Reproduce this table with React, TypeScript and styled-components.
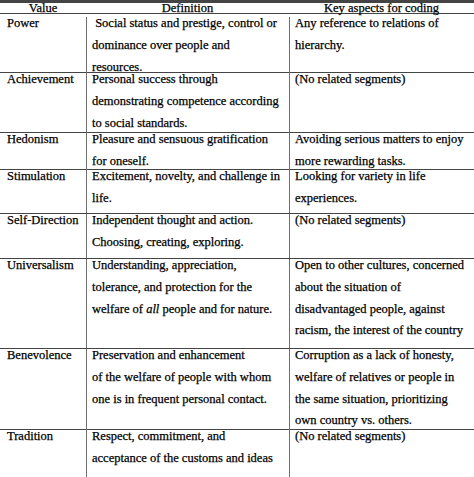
import { ReactElement, ReactNode } from 'react';
import styled, { createGlobalStyle } from 'styled-components';

const GlobalStyle = createGlobalStyle`
  html, body {
    margin: 0;
    padding: 0;
    background: #ffffff;
  }

  body {
    font-family: "Liberation Serif", "Times New Roman", serif;
    color: #000000;
  }
`;

const Table = styled.div`
  width: 474px;
  height: 477px;
  overflow: hidden;

  border-top: 3px solid #444444;
  font-size: 12.5px;
  -webkit-text-stroke: 0.25px #000000;
`;

const HeadRow = styled.div`
  display: grid;
  grid-template-columns: 86px 203px 1fr;

  height: 10px;
  line-height: 10px;
`;

const HeadCell = styled.div`
  text-align: center;
  white-space: nowrap;
  margin-top: 0;
`;

const Row = styled.div<{ $height: number; $lead?: number }>`
  display: grid;
  grid-template-columns: 86px 203px 1fr;

  box-sizing: border-box;
  height: ${(p) => p.$height}px;
  padding-top: ${(p) => p.$lead ?? 0}px;

  border-top: 1px solid #444444;
`;

const Cell = styled.div<{ $divider?: boolean }>`
  box-sizing: border-box;
  padding: 0 5px 0 ${(p) => (p.$divider ? '5px' : '7px')};
  border-left: ${(p) => (p.$divider ? '1px solid #6f6f6f' : 'none')};

  line-height: 21.8px;
  white-space: nowrap;
`;

const Lines = styled.div`
  margin-top: -4px;
`;

interface Entry {
  value: string;
  height: number;
  lead?: number;
  definition: ReactNode[];
  aspects: ReactNode[];
}

const entries: Entry[] = [
  {
    value: 'Power',
    height: 59,
    lead: 3,
    definition: ['\u00a0Social status and prestige, control or', 'dominance over people and', 'resources.'],
    aspects: ['Any reference to relations of', 'hierarchy.'],
  },
  {
    value: 'Achievement',
    height: 60,
    definition: ['Personal success through', 'demonstrating competence according', 'to social standards.'],
    aspects: ['(No related segments)'],
  },
  {
    value: 'Hedonism',
    height: 37,
    definition: ['Pleasure and sensuous gratification', 'for oneself.'],
    aspects: ['Avoiding serious matters to enjoy', 'more rewarding tasks.'],
  },
  {
    value: 'Stimulation',
    height: 44,
    definition: ['Excitement, novelty, and challenge in', 'life.'],
    aspects: ['Looking for variety in life', 'experiences.'],
  },
  {
    value: 'Self-Direction',
    height: 45,
    definition: ['Independent thought and action.', 'Choosing, creating, exploring.'],
    aspects: ['(No related segments)'],
  },
  {
    value: 'Universalism',
    height: 90,
    definition: [
      'Understanding, appreciation,',
      'tolerance, and protection for the',
      <>welfare of <i>all</i> people and for nature.</>,
    ],
    aspects: [
      'Open to other cultures, concerned',
      'about the situation of',
      'disadvantaged people, against',
      'racism, the interest of the country',
    ],
  },
  {
    value: 'Benevolence',
    height: 81,
    definition: ['Preservation and enhancement', 'of the welfare of people with whom', 'one is in frequent personal contact.'],
    aspects: [
      'Corruption as a lack of honesty,',
      'welfare of relatives or people in',
      'the same situation, prioritizing',
      'own country vs. others.',
    ],
  },
  {
    value: 'Tradition',
    height: 60,
    definition: ['Respect, commitment, and', 'acceptance of the customs and ideas'],
    aspects: ['(No related segments)'],
  },
];

function LineList({ items }: { items: ReactNode[] }): ReactElement {
  return (
    <Lines>
      {items.map((item, i) => (
        <div key={i}>{item}</div>
      ))}
    </Lines>
  );
}

/**
 * Table of values, definitions and coding aspects
 */
export default function App(): ReactElement {
  return (
    <>
      <GlobalStyle/>
      <Table>
        <HeadRow>
          <HeadCell>Value</HeadCell>
          <HeadCell>Definition</HeadCell>
          <HeadCell>Key aspects for coding</HeadCell>
        </HeadRow>
        {entries.map((entry) => (
          <Row key={entry.value} $height={entry.height} $lead={entry.lead}>
            <Cell>
              <LineList items={[entry.value]}/>
            </Cell>
            <Cell $divider>
              <LineList items={entry.definition}/>
            </Cell>
            <Cell $divider>
              <LineList items={entry.aspects}/>
            </Cell>
          </Row>
        ))}
      </Table>
    </>
  );
}
